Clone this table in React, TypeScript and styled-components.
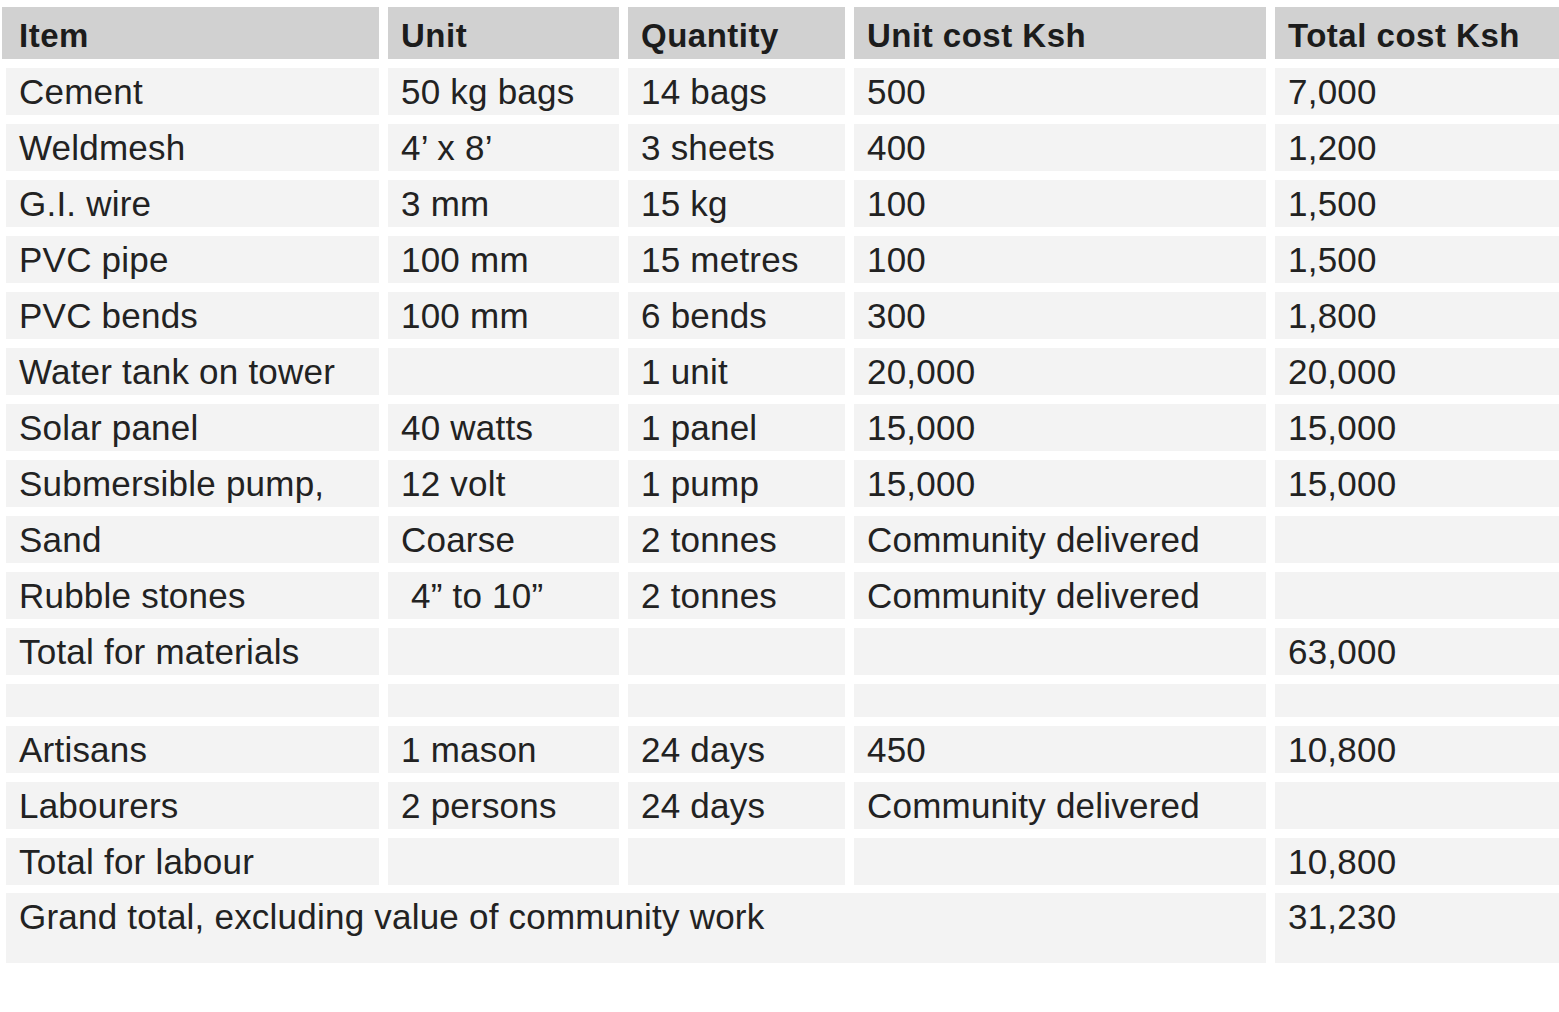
import React from 'react'
import styled, {createGlobalStyle} from 'styled-components'

type Row = {
  cells: string[]
  kind?: 'blank' | 'grand'
}

const header = ['Item', 'Unit', 'Quantity', 'Unit cost Ksh', 'Total cost Ksh']

const rows: Row[] = [
  {cells: ['Cement', '50 kg bags', '14 bags', '500', '7,000']},
  {cells: ['Weldmesh', '4’ x 8’', '3 sheets', '400', '1,200']},
  {cells: ['G.I. wire', '3 mm', '15 kg', '100', '1,500']},
  {cells: ['PVC pipe', '100 mm', '15 metres', '100', '1,500']},
  {cells: ['PVC bends', '100 mm', '6 bends', '300', '1,800']},
  {cells: ['Water tank on tower', '', '1 unit', '20,000', '20,000']},
  {cells: ['Solar panel', '40 watts', '1 panel', '15,000', '15,000']},
  {cells: ['Submersible pump,', '12 volt', '1 pump', '15,000', '15,000']},
  {cells: ['Sand', 'Coarse', '2 tonnes', 'Community delivered', '']},
  {cells: ['Rubble stones', '\u00a04” to 10”', '2 tonnes', 'Community delivered', '']},
  {cells: ['Total for materials', '', '', '', '63,000']},
  {cells: ['', '', '', '', ''], kind: 'blank'},
  {cells: ['Artisans', '1 mason', '24 days', '450', '10,800']},
  {cells: ['Labourers', '2 persons', '24 days', 'Community delivered', '']},
  {cells: ['Total for labour', '', '', '', '10,800']},
]

const GlobalStyle = createGlobalStyle`
  html, body {
    margin: 0;
    padding: 0;
    background: #ffffff;
  }
  body {
    font-family: "Liberation Sans", Arial, sans-serif;
    color: #222222;
    overflow: hidden;
  }
`

const Table = styled.div`
  display: grid;
  grid-template-columns: 373px 231px 217px 412px 1fr;
  gap: 8px 9px;
  padding: 7px 0 0 6px;
`

const HeadCell = styled.div<{$first?: boolean}>`
  background: #d1d1d1;
  height: 52px;
  box-sizing: border-box;
  padding: 5px 0 0 ${p => (p.$first ? '17px' : '13px')};
  margin-left: ${p => (p.$first ? '-4px' : '0')};
  font-weight: 700;
  font-size: 33px;
  letter-spacing: 0.5px;
  line-height: 47px;
  color: #1c1c1c;
  white-space: nowrap;
`

const Cell = styled.div<{$kind?: 'blank' | 'grand'; $span?: number}>`
  background: #f3f3f3;
  height: ${p => (p.$kind === 'blank' ? '33px' : p.$kind === 'grand' ? '70px' : '47px')};
  margin-top: ${p => (p.$kind === 'grand' ? '0' : '1px')};
  padding-left: 13px;
  font-size: 35px;
  letter-spacing: 0.22px;
  line-height: 47px;
  color: #222222;
  white-space: nowrap;
  overflow: hidden;
  grid-column: ${p => (p.$span ? `span ${p.$span}` : 'auto')};
`

function App() {
  return (
    <>
      <GlobalStyle />
      <Table>
        {header.map((h, i) => (
          <HeadCell key={`h-${i}`} $first={i === 0}>
            {h}
          </HeadCell>
        ))}
        {rows.map((row, r) =>
          row.cells.map((c, i) => (
            <Cell key={`r${r}-${i}`} $kind={row.kind}>
              {c}
            </Cell>
          )),
        )}
        <Cell $kind="grand" $span={4}>
          Grand total, excluding value of community work
        </Cell>
        <Cell $kind="grand">31,230</Cell>
      </Table>
    </>
  )
}

export default App
